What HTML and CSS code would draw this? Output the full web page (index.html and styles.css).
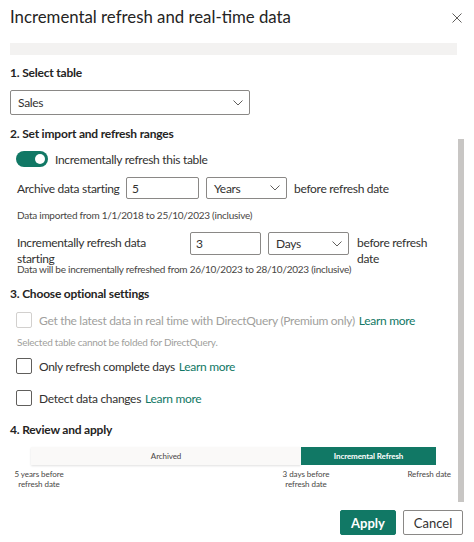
FILE: index.html
```html
<!DOCTYPE html>
<html lang="en">
<head>
<meta charset="utf-8">
<title>Incremental refresh and real-time data</title>
<link rel="stylesheet" href="styles.css">
</head>
<body>
<div class="dialog">
  <div class="header">
    <h1 class="title">Incremental refresh and real-time data</h1>
    <button class="close" aria-label="Close">
      <svg width="10" height="10" viewBox="0 0 10 10"><path d="M0.5 0.5 L9.5 9.5 M9.5 0.5 L0.5 9.5" stroke="#605e5c" stroke-width="1" fill="none"/></svg>
    </button>
  </div>
  <div class="scroll-area">
    <div class="scroll-content">
      <div class="banner"></div>

      <h2 class="section-title s1">1. Select table</h2>
      <div class="select table-select">
        <span>Sales</span>
        <svg class="chev" width="10" height="6" viewBox="0 0 10 6"><path d="M0.5 0.5 L5 5 L9.5 0.5" stroke="#605e5c" stroke-width="1" fill="none"/></svg>
      </div>

      <h2 class="section-title s2">2. Set import and refresh ranges</h2>
      <div class="indent">
        <div class="toggle-row">
          <span class="toggle"><span class="knob"></span></span>
          <span class="toggle-text">Incrementally refresh this table</span>
        </div>
        <div class="range-row archive">
          <span class="range-label archive-label">Archive data starting</span>
          <div class="input archive-input">5</div>
          <div class="select unit">
            <span>Years</span>
            <svg class="chev" width="10" height="6" viewBox="0 0 10 6"><path d="M0.5 0.5 L5 5 L9.5 0.5" stroke="#605e5c" stroke-width="1" fill="none"/></svg>
          </div>
          <span class="range-suffix">before refresh date</span>
        </div>
        <p class="note note-1">Data imported from 1/1/2018 to 25/10/2023 (inclusive)</p>
        <div class="range-row incr">
          <span class="range-label incr-label"><span class="wrap">Incrementally refresh data starting</span></span>
          <div class="input incr-input">3</div>
          <div class="select unit">
            <span>Days</span>
            <svg class="chev" width="10" height="6" viewBox="0 0 10 6"><path d="M0.5 0.5 L5 5 L9.5 0.5" stroke="#605e5c" stroke-width="1" fill="none"/></svg>
          </div>
          <span class="range-suffix incr-suffix">before refresh date</span>
        </div>
        <p class="note note-2">Data will be incrementally refreshed from 26/10/2023 to 28/10/2023 (inclusive)</p>
      </div>

      <h2 class="section-title s3">3. Choose optional settings</h2>
      <div class="indent">
        <div class="check disabled c1">
          <span class="box"></span>
          <span class="check-text">Get the latest data in real time with DirectQuery (Premium only)</span>
          <a class="link" href="#">Learn more</a>
        </div>
        <p class="note note-3">Selected table cannot be folded for DirectQuery.</p>
        <div class="check c2">
          <span class="box"></span>
          <span class="check-text">Only refresh complete days</span>
          <a class="link" href="#">Learn more</a>
        </div>
        <div class="check c3">
          <span class="box"></span>
          <span class="check-text">Detect data changes</span>
          <a class="link" href="#">Learn more</a>
        </div>
      </div>

      <h2 class="section-title s4">4. Review and apply</h2>
      <div class="timeline">
        <div class="bar">
          <div class="seg archived">Archived</div>
          <div class="seg incremental">Incremental Refresh</div>
        </div>
        <div class="ticks">
          <span class="tick tick-start">5 years before<br>refresh date</span>
          <span class="tick tick-mid">3 days before<br>refresh date</span>
          <span class="tick tick-end">Refresh date</span>
        </div>
      </div>
    </div>
    <div class="scrollbar"><div class="thumb"></div></div>
  </div>
  <div class="footer">
    <button class="btn primary">Apply</button>
    <button class="btn secondary">Cancel</button>
  </div>
</div>
</body>
</html>
```

FILE: styles.css
```css
* { box-sizing: border-box; }

html, body {
  margin: 0;
  padding: 0;
  background: #ffffff;
}

body {
  font-family: Lato, "Open Sans", sans-serif;
  color: #323130;
  font-size: 12px;
  letter-spacing: -0.3px;
}

.dialog {
  width: 474px;
  height: 542px;
  padding-left: 10px;
  overflow: hidden;
}

.header {
  height: 36px;
  display: flex;
  justify-content: space-between;
  align-items: flex-start;
  padding-right: 12px;
}

.title {
  margin: 0;
  padding-top: 5px;
  font-size: 16.8px;
  line-height: 24px;
  font-weight: 400;
  letter-spacing: 0;
  color: #252423;
}

.close {
  margin-top: 13px;
  padding: 0;
  border: 0;
  background: transparent;
  width: 10px;
  height: 10px;
  display: block;
}
.close svg { display: block; }

.scroll-area {
  display: flex;
  height: 466px;
}

.scroll-content {
  width: 447px;
}

.scrollbar {
  margin-left: 1px;
  width: 6px;
  padding-top: 103px;
}
.thumb {
  width: 6px;
  height: 363px;
  background: #c8c6c4;
}

.banner {
  margin-top: 7px;
  height: 12px;
  background: #f3f2f1;
}

.section-title {
  margin: 0;
  font-size: 12px;
  line-height: 16px;
  font-weight: 700;
  letter-spacing: -0.2px;
  color: #252423;
}
.s1 { margin-top: 10px; }
.s2 { margin-top: 11px; }
.s3 { margin-top: 10px; }
.s4 { margin-top: 16px; }

.select {
  display: flex;
  align-items: center;
  justify-content: space-between;
  border: 1px solid #8a8886;
  border-radius: 2px;
  background: #fff;
  color: #323130;
  padding: 0 6px 0 7px;
}
.chev { display: block; }

.table-select {
  margin-top: 9px;
  width: 240px;
  height: 25px;
}

.indent { padding-left: 6px; }

.toggle-row {
  margin-top: 9px;
  height: 16px;
  display: flex;
  align-items: center;
  gap: 7px;
}
.toggle {
  width: 32px;
  height: 16px;
  border-radius: 8px;
  background: #117865;
  display: flex;
  align-items: center;
  justify-content: flex-end;
  padding-right: 3px;
}
.knob {
  width: 10px;
  height: 10px;
  border-radius: 50%;
  background: #fff;
}

.range-row {
  display: flex;
  gap: 7px;
}
.range-row.archive {
  margin-top: 10px;
  height: 22px;
  align-items: center;
}
.range-label { margin-left: 1px; }
.archive-label { width: 102px; white-space: nowrap; }

.input {
  border: 1px solid #8a8886;
  border-radius: 2px;
  background: #fff;
  padding-left: 5px;
  display: flex;
  align-items: center;
}
.archive-input { width: 73px; height: 22px; }
.unit { width: 81px; }
.archive .unit { height: 22px; }

.range-row.incr {
  margin-top: 10px;
  height: 31px;
  align-items: flex-start;
}
.incr-label {
  width: 166px;
  padding-top: 3px;
  line-height: 16px;
}
.incr-label .wrap {
  display: block;
  width: 140px;
}
.incr-input { width: 71px; height: 23px; }
.incr .unit { height: 23px; }
.incr-suffix {
  margin-left: 1px;
  width: 80px;
  padding-top: 3px;
  line-height: 16px;
}

.note {
  margin: 0;
  font-size: 10px;
  line-height: 13px;
  letter-spacing: -0.25px;
  color: #484644;
}
.note-1 { margin-top: 10px; margin-left: 1px; }
.note-2 { margin-left: 1px; }
.note-3 { margin-top: 8px; margin-left: 1px; color: #a19f9d; }

.check {
  display: flex;
  align-items: center;
  height: 16px;
}
.box {
  width: 16px;
  height: 16px;
  border: 1px solid #605e5c;
  border-radius: 2px;
  background: #fff;
  margin-right: 7px;
  flex: none;
}
.check-text { margin-right: 4px; }
.c1 { margin-top: 10px; }
.c2 { margin-top: 9px; }
.c3 { margin-top: 16px; }
.check.disabled .box { border-color: #d2d0ce; }
.check.disabled .check-text { color: #a19f9d; }

.link {
  color: #117865;
  text-decoration: none;
}

.timeline {
  margin-top: 9px;
}
.bar {
  margin-left: 21px;
  width: 405px;
  height: 18px;
  display: flex;
}
.seg {
  height: 18px;
  display: flex;
  align-items: center;
  justify-content: center;
  font-size: 8px;
  letter-spacing: -0.1px;
}
.archived {
  width: 270px;
  background: #faf9f8;
  color: #484644;
  box-shadow: 0 1px 2px rgba(0,0,0,0.12);
}
.incremental {
  flex: 1;
  background: #117865;
  color: #fff;
  font-weight: 700;
}

.ticks {
  position: relative;
  height: 24px;
  margin-top: 4px;
}
.tick {
  position: absolute;
  top: 0;
  font-size: 8px;
  line-height: 10px;
  letter-spacing: -0.05px;
  color: #484644;
  text-align: center;
  white-space: nowrap;
}
.tick-start { left: 29px; transform: translateX(-50%); }
.tick-mid { left: 296px; transform: translateX(-50%); }
.tick-end { right: 6px; }

.footer {
  margin-top: 8px;
  display: flex;
  justify-content: flex-end;
  gap: 7px;
  padding-right: 11px;
}
.btn {
  height: 25px;
  font-family: Lato, "Open Sans", sans-serif;
  font-size: 13px;
  border-radius: 2px;
  padding: 0;
}
.primary {
  width: 56px;
  background: #117865;
  border: 1px solid #117865;
  color: #fff;
  font-weight: 700;
}
.secondary {
  width: 60px;
  background: #fff;
  border: 1px solid #8a8886;
  color: #323130;
}
```
